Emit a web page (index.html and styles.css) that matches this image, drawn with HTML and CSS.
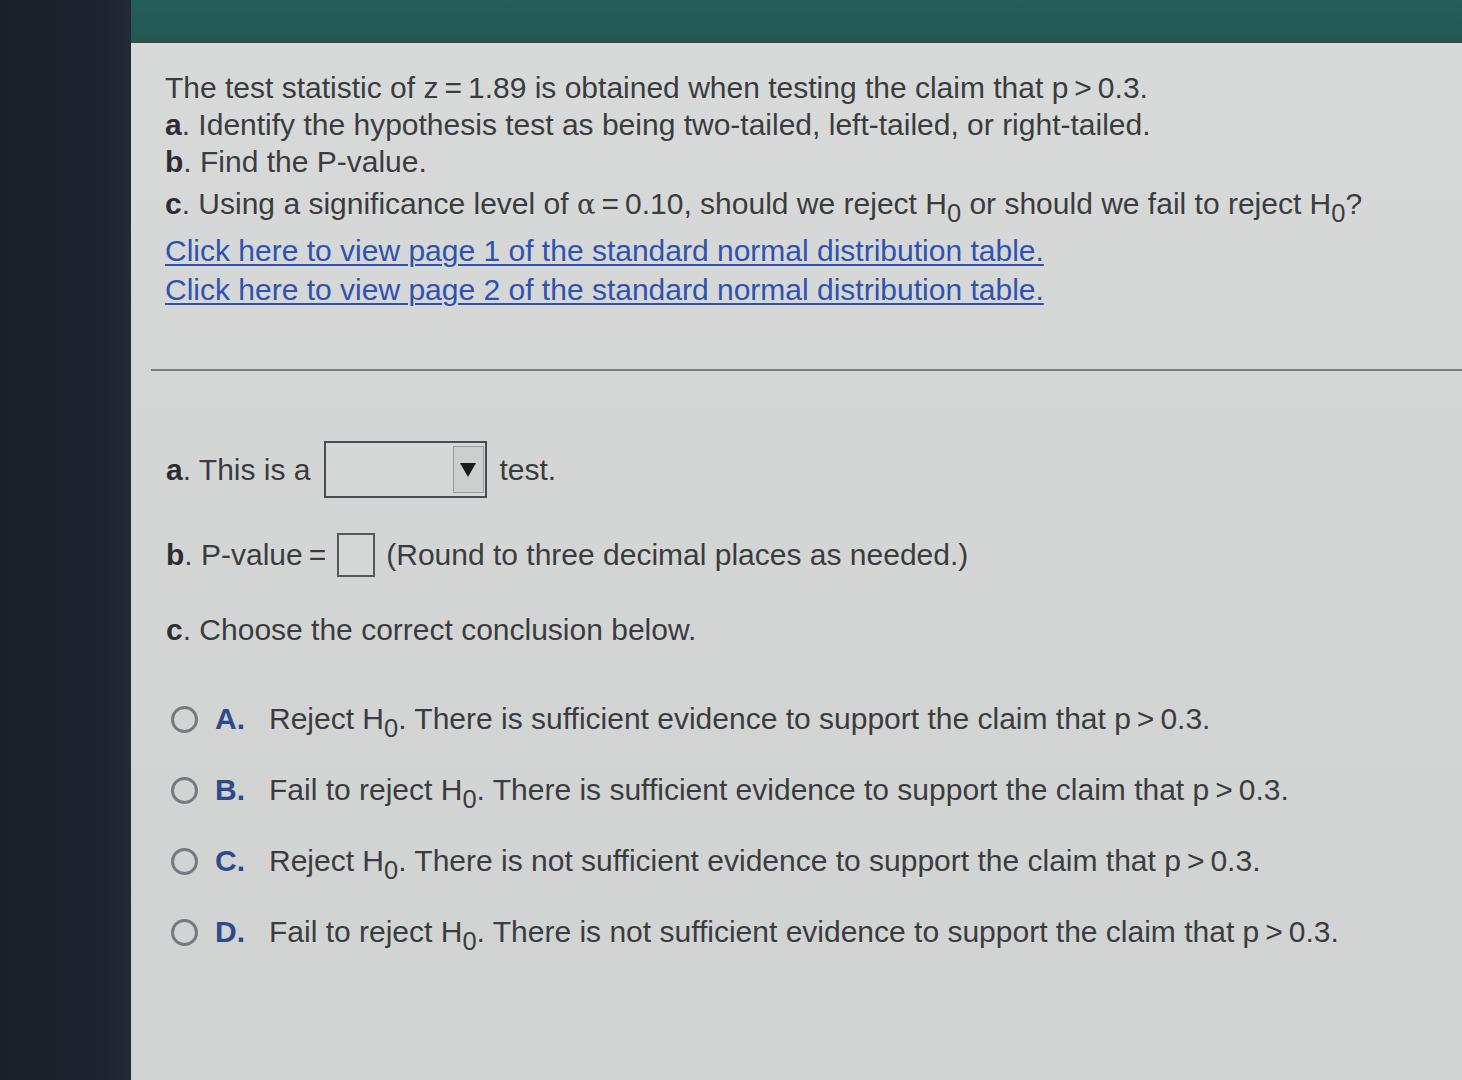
FILE: index.html
```html
<!DOCTYPE html>
<html>
<head>
<meta charset="utf-8">
<link rel="stylesheet" href="styles.css">
</head>
<body>
<div class="screen">
  <div class="bezel"></div>
  <div class="main">
    <div class="topbar"></div>
    <div class="panel">
      <div class="question">
        <p class="line">The test statistic of z&thinsp;=&thinsp;1.89 is obtained when testing the claim that p&thinsp;&gt;&thinsp;0.3.</p>
        <p class="line"><b class="lbl">a</b>. Identify the hypothesis test as being two-tailed, left-tailed, or right-tailed.</p>
        <p class="line"><b class="lbl">b</b>. Find the P-value.</p>
        <p class="line tall"><b class="lbl">c</b>. Using a significance level of <span class="alpha">α</span>&thinsp;=&thinsp;0.10, should we reject H<sub>0</sub> or should we fail to reject H<sub>0</sub>?</p>
        <p class="line link-line"><a class="link" href="#">Click here to view page 1 of the standard normal distribution table.</a></p>
        <p class="line link-line"><a class="link" href="#">Click here to view page 2 of the standard normal distribution table.</a></p>
      </div>
      <div class="divider"></div>
      <div class="answers">
        <div class="row row-a">
          <span><b class="lbl">a</b>. This is a</span>
          <span class="select"><span class="arrow"><svg width="18" height="16" viewBox="0 0 18 16"><path d="M1 1 L17 1 L9 15 Z" fill="#1a1a1a"/></svg></span></span>
          <span>test.</span>
        </div>
        <div class="row row-b">
          <span><b class="lbl">b</b>. P-value&thinsp;=</span>
          <span class="input"></span>
          <span>(Round to three decimal places as needed.)</span>
        </div>
        <div class="row row-c">
          <span><b class="lbl">c</b>. Choose the correct conclusion below.</span>
        </div>
        <div class="options">
          <div class="option"><span class="radio"></span><b class="opt">A.</b><span>Reject H<sub>0</sub>. There is sufficient evidence to support the claim that p&thinsp;&gt;&thinsp;0.3.</span></div>
          <div class="option"><span class="radio"></span><b class="opt">B.</b><span>Fail to reject H<sub>0</sub>. There is sufficient evidence to support the claim that p&thinsp;&gt;&thinsp;0.3.</span></div>
          <div class="option"><span class="radio"></span><b class="opt">C.</b><span>Reject H<sub>0</sub>. There is not sufficient evidence to support the claim that p&thinsp;&gt;&thinsp;0.3.</span></div>
          <div class="option"><span class="radio"></span><b class="opt">D.</b><span>Fail to reject H<sub>0</sub>. There is not sufficient evidence to support the claim that p&thinsp;&gt;&thinsp;0.3.</span></div>
        </div>
      </div>
    </div>
  </div>
</div>
</body>
</html>
```
FILE: styles.css
```css
html, body {
  margin: 0;
  padding: 0;
  height: 100%;
  background: #1b222c;
}
.screen {
  display: flex;
  width: 1462px;
  height: 1080px;
  overflow: hidden;
}
.bezel {
  width: 131px;
  flex: none;
  background: linear-gradient(90deg, #1a2029 0%, #1e2530 80%, #232a36 100%);
}
.main {
  flex: 1;
  display: flex;
  flex-direction: column;
}
.topbar {
  height: 41px;
  flex: none;
  background: linear-gradient(180deg, #265e59 0%, #235752 100%);
  border-bottom: 2px solid #3a4a4a;
}
.panel {
  flex: 1;
  background: linear-gradient(180deg, #d8dad9 0%, #d4d6d5 40%, #d1d3d2 100%);
  font-family: "Liberation Sans", Arial, sans-serif;
  font-size: 30px;
  color: #3a3c40;
}
.question {
  padding: 26px 0 0 34px;
}
.line {
  margin: 0;
  height: 37px;
  line-height: 37px;
  white-space: nowrap;
}
.line.tall {
  height: 47px;
  line-height: 47px;
  margin-bottom: 4px;
}
.line.link-line {
  height: 39px;
  line-height: 39px;
}
.lbl {
  font-weight: bold;
  color: #2c2e31;
}
sub {
  font-size: 0.85em;
  vertical-align: -0.32em;
  line-height: 0;
}
.alpha {
  font-family: "DejaVu Serif", serif;
  font-size: 0.92em;
}
.link {
  color: #2f52ae;
  text-decoration: underline;
  text-decoration-thickness: 2px;
  text-underline-offset: 3px;
}
.divider {
  margin: 60px 0 0 20px;
  border-top: 2px solid #7a7c7d;
}
.answers {
  padding: 70px 0 0 35px;
}
.row {
  display: flex;
  align-items: center;
  gap: 13px;
  white-space: nowrap;
}
.select {
  width: 163px;
  height: 57px;
  box-sizing: border-box;
  border: 2px solid #4a4c52;
  background: #d6d8d8;
  display: flex;
  justify-content: flex-end;
  align-items: center;
}
.arrow {
  width: 31px;
  height: 47px;
  margin-right: 1px;
  box-sizing: border-box;
  border: 1px solid #9a9c9e;
  background: #cdcfcf;
  display: flex;
  align-items: center;
  justify-content: center;
}
.row-b {
  margin-top: 35px;
  gap: 11px;
}
.input {
  width: 38px;
  height: 44px;
  box-sizing: border-box;
  border: 2px solid #55575a;
  background: #d6d8d8;
}
.row-c {
  margin-top: 36px;
}
.options {
  margin-top: 54px;
  display: flex;
  flex-direction: column;
  gap: 35px;
}
.option {
  display: flex;
  align-items: center;
  white-space: nowrap;
  height: 36px;
  padding-left: 5px;
}
.radio {
  width: 27px;
  height: 27px;
  border: 3px solid #767a80;
  border-radius: 50%;
  box-sizing: border-box;
  margin-right: 17px;
  flex: none;
}
.opt {
  color: #2d4b8c;
  width: 54px;
  flex: none;
}
```
